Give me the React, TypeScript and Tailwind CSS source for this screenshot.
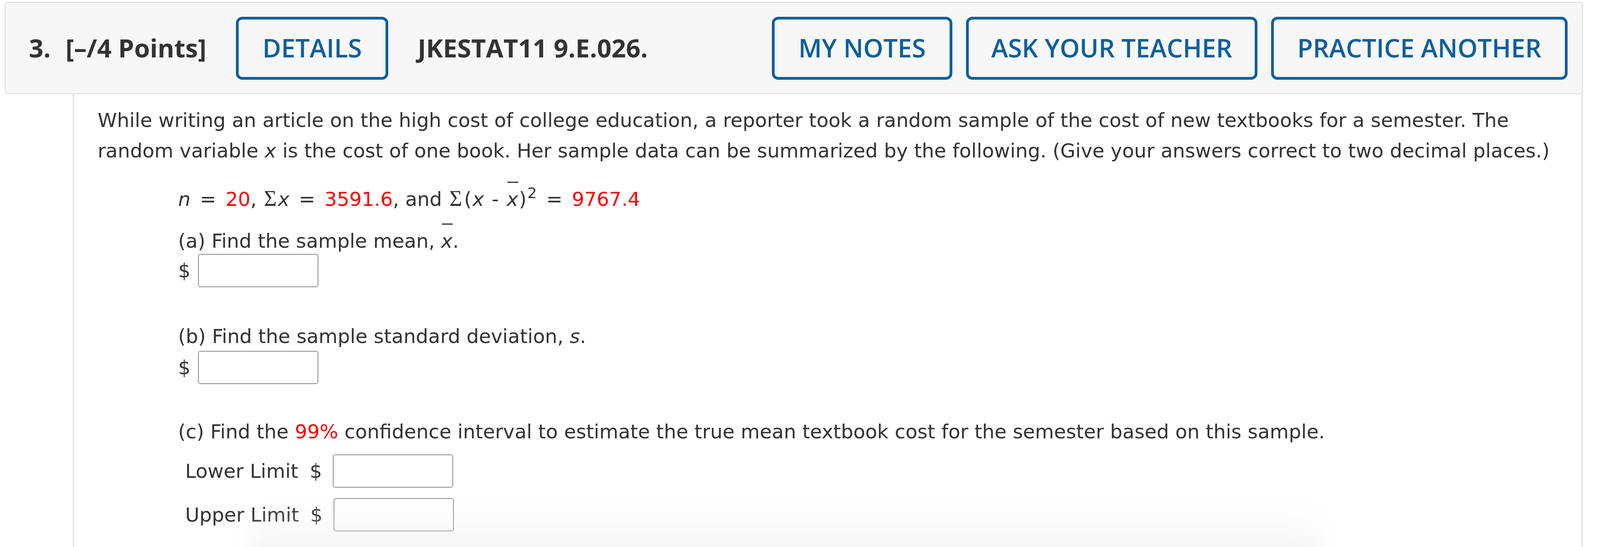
import type { ReactNode } from 'react'

const headerFont = "font-['Open_Sans','Liberation_Sans',sans-serif]"

function HeaderButton({ label, width }: { label: string; width: string }) {
  return (
    <button
      type="button"
      className={`${width} flex h-[161px] shrink-0 items-center justify-center rounded-[16px] border-[7px] border-[#0d5f9c] bg-[#f7f7f7] text-[65px] font-semibold text-[#0d5f9c] ${headerFont}`}
    >
      {label}
    </button>
  )
}

function Red({ children }: { children: ReactNode }) {
  return <span className="text-[#ff0000]">{children}</span>
}

function Eq() {
  return <span className="mx-[8px]"> = </span>
}

function XBar() {
  return (
    <span className="relative inline-block italic">
      x
      <span className="absolute left-[2px] top-[-6px] h-[3px] w-[28px] bg-[#333]" />
    </span>
  )
}

function Sigma() {
  return <span className="mx-[3px] font-['Liberation_Serif',serif] text-[56px]">Σ</span>
}

function AnswerBox() {
  return <span className="inline-block h-[85px] w-[308px] shrink-0 rounded-[6px] border-2 border-[#8a8a8a] bg-white" />
}

export default function App() {
  return (
    <div className="relative h-[1400px] w-full overflow-hidden bg-white text-[#333] font-['Verdana','DejaVu_Sans',sans-serif]">
      {/* Question header */}
      <div className="ml-[12px] mr-[44px] mt-[5px] flex h-[236px] items-center rounded-[6px] border-2 border-[#dcdcdc] bg-[#f7f7f7] pl-[60px] pr-[37px]">
        <div className={`flex items-center text-[65px] font-bold text-[#333] ${headerFont}`}>
          <span>3.</span>
          <span className="ml-[38px]">[–/4 Points]</span>
        </div>
        <div className="ml-[76px]">
          <HeaderButton label="DETAILS" width="w-[390px]" />
        </div>
        <div className={`ml-[75px] text-[65px] font-bold text-[#333] ${headerFont}`}>JKESTAT11 9.E.026.</div>
        <div className="ml-auto flex gap-[35px]">
          <HeaderButton label="MY NOTES" width="w-[462px]" />
          <HeaderButton label="ASK YOUR TEACHER" width="w-[746px]" />
          <HeaderButton label="PRACTICE ANOTHER" width="w-[759px]" />
        </div>
      </div>

      {/* Question body */}
      <div className="ml-[187px] mr-[45px] h-[1200px] border-x-2 border-[#cfcfcf] pl-[61px] pr-[20px] pt-[28px] text-[50px] leading-[78px]">
        <p>
          While writing an article on the high cost of college education, a reporter took a random sample of the cost of new textbooks for a semester. The random variable <i>x</i> is the cost of one book. Her sample data can be summarized by the following. (Give your answers correct to two decimal places.)
        </p>

        <div className="pl-[206px]">
          <p className="mt-[44px] whitespace-nowrap">
            <i>n</i>
            <Eq />
            <Red>20</Red>, <Sigma />
            <i>x</i>
            <Eq />
            <Red>3591.6</Red>, and <Sigma />
            <span className="mx-[2px]">(</span>
            <i>x</i>
            <span className="mx-[4px]"> - </span>
            <XBar />
            <span className="mx-[2px]">)</span>
            <span className="relative top-[-20px] text-[38px]">2</span>
            <Eq />
            <Red>9767.4</Red>
          </p>

          <p className="mt-[25px]">
            (a) Find the sample mean, <XBar />.
          </p>
          <div className="mt-[-6px] flex items-center">
            <span className="mr-[19px]">$</span>
            <AnswerBox />
          </div>

          <p className="mt-[87px]">
            (b) Find the sample standard deviation, <i>s</i>.
          </p>
          <div className="mt-[-2px] flex items-center">
            <span className="mr-[19px]">$</span>
            <AnswerBox />
          </div>

          <p className="mt-[83px]">
            (c) Find the <Red>99%</Red> confidence interval to estimate the true mean textbook cost for the semester based on this sample.
          </p>
          <div className="mt-[19px] flex items-center pl-[18px]">
            <span>Lower Limit</span>
            <span className="ml-[29px] mr-[28px]">$</span>
            <AnswerBox />
          </div>
          <div className="mt-[27px] flex items-center pl-[18px]">
            <span>Upper Limit</span>
            <span className="ml-[29px] mr-[28px]">$</span>
            <AnswerBox />
          </div>
        </div>
      </div>

      {/* faint shadow at the bottom edge */}
      <div className="pointer-events-none absolute left-[640px] right-[711px] top-[1285px] h-[220px] rounded-[80px] bg-gradient-to-b from-transparent to-[#e9e9e9] opacity-70 blur-[30px]" />
    </div>
  )
}
